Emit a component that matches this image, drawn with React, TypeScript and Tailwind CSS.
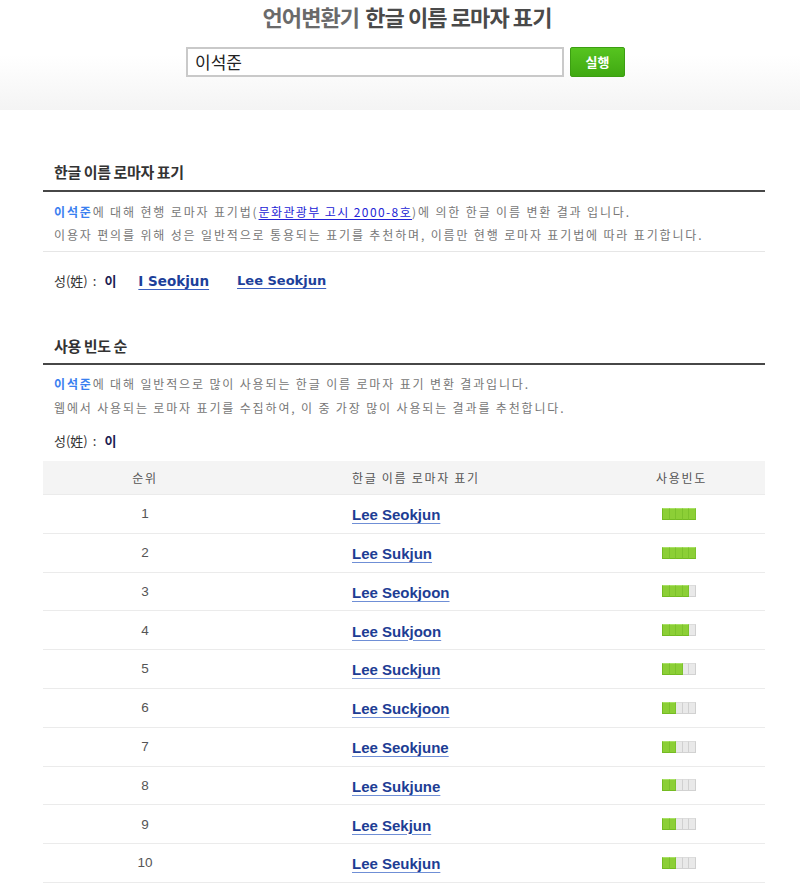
import React from "react";

const KR = "font-['Noto_Sans_CJK_KR',_'Noto_Sans',_sans-serif]";

const rows: [number, string, number][] = [
  [1, "Lee Seokjun", 5],
  [2, "Lee Sukjun", 5],
  [3, "Lee Seokjoon", 4],
  [4, "Lee Sukjoon", 4],
  [5, "Lee Suckjun", 3],
  [6, "Lee Suckjoon", 2],
  [7, "Lee Seokjune", 2],
  [8, "Lee Sukjune", 2],
  [9, "Lee Sekjun", 2],
  [10, "Lee Seukjun", 2],
];

function Bar({ n }: { n: number }) {
  return (
    <div className="flex h-[12px] w-[34px]">
      {[0, 1, 2, 3, 4].map((i) =>
        i < n ? (
          <div
            key={i}
            className="flex-1 bg-[#8ccf36] border-t border-t-[#a9e066] border-b border-b-[#74bb22] border-r border-r-[#7cc22c] first:border-l first:border-l-[#74bb22]"
          />
        ) : (
          <div
            key={i}
            className="flex-1 bg-[#e9e9e9] border-t border-t-[#dcdcdc] border-b border-b-[#d2d2d2] border-r border-r-[#d0d0d0]"
          />
        )
      )}
    </div>
  );
}

function SurnameRow({ links }: { links?: boolean }) {
  return (
    <div className={`flex items-center h-[20px] pl-[11px] text-[13px] text-[#333] ${KR}`}>
      <span>성(姓)</span>
      <span className="ml-[5px]">:</span>
      <span className="ml-[8px] font-bold text-[#1b1b52]">이</span>
      {links && (
        <>
          <a className="ml-[22px] font-['DejaVu_Sans',_sans-serif] font-bold text-[13.5px] text-[#1d3f9a] underline underline-offset-[3px] decoration-[#3a5fc0]">
            I Seokjun
          </a>
          <a className="ml-[28px] font-['DejaVu_Sans',_sans-serif] font-bold text-[13px] text-[#1d3f9a] underline underline-offset-[3px] decoration-[#3a5fc0]">
            Lee Seokjun
          </a>
        </>
      )}
    </div>
  );
}

export default function App() {
  return (
    <div className={`w-[800px] min-h-[895px] bg-white ${KR}`}>
      <div className="h-[110px] bg-gradient-to-b from-white via-white to-[#f4f4f4] flex flex-col items-center">
        <div className="mt-[2px] h-[28px] flex items-center text-[22px] tracking-[-0.9px] leading-[28px] pl-[14px]">
          <span className="font-semibold text-[#6a6a6a]">언어변환기</span>
          <span className="font-bold text-[#4a4a4a] ml-[6px]">한글 이름 로마자 표기</span>
        </div>
        <div className="mt-[17px] flex items-center pl-[11px]">
          <div className="w-[378px] h-[30px] border-2 border-[#c9c9c9] bg-white flex items-center pl-[7px] text-[17px] text-[#222]">
            이석준
          </div>
          <div className="ml-[6px] w-[55px] h-[30px] rounded-[2px] border border-[#3c9e12] bg-gradient-to-b from-[#56c41f] to-[#40a912] flex items-center justify-center text-white text-[13px] font-bold">
            실행
          </div>
        </div>
      </div>

      <div className="ml-[43px] w-[722px]">
        {/* Section 1 */}
        <div className="mt-[52px] pl-[11px] pb-[8px] border-b-2 border-[#474747] text-[15px] leading-[20px] font-bold tracking-[-0.4px] text-[#333]">
          한글 이름 로마자 표기
        </div>
        <div className="pt-[8px] pb-[5px] pl-[11px] border-b border-[#e6e6e6] text-[12px] leading-[23px] tracking-[1.85px] text-[#777]">
          <div>
            <span className="font-bold text-[#3a80f0]">이석준</span>에 대해 현행 로마자 표기법(
            <a className="text-[#2323d6] underline underline-offset-2 tracking-[1.4px]">문화관광부 고시 2000-8호</a>)에 의한 한글 이름 변환 결과 입니다.
          </div>
          <div>이용자 편의를 위해 성은 일반적으로 통용되는 표기를 추천하며, 이름만 현행 로마자 표기법에 따라 표기합니다.</div>
        </div>
        <div className="mt-[19px]">
          <SurnameRow links />
        </div>

        {/* Section 2 */}
        <div className="mt-[45px] pl-[11px] pb-[7px] border-b-2 border-[#474747] text-[15px] leading-[20px] font-bold tracking-[-0.4px] text-[#333]">
          사용 빈도 순
        </div>
        <div className="pt-[7px] pl-[11px] text-[12px] leading-[24px] tracking-[1.85px] text-[#777]">
          <div>
            <span className="font-bold text-[#3a80f0]">이석준</span>에 대해 일반적으로 많이 사용되는 한글 이름 로마자 표기 변환 결과입니다.
          </div>
          <div>웹에서 사용되는 로마자 표기를 수집하여, 이 중 가장 많이 사용되는 결과를 추천합니다.</div>
        </div>
        <div className="mt-[11px]">
          <SurnameRow />
        </div>

        <div className="mt-[10px]">
          <div className="grid grid-cols-[204px_1fr_160px] h-[34px] bg-[#f4f4f4] border-b border-[#ebebeb] items-center text-[12px] text-[#555] tracking-[1.7px]">
            <div className="text-center">순위</div>
            <div className="pl-[105px]">한글 이름 로마자 표기</div>
            <div className="pl-[51px]">사용빈도</div>
          </div>
          {rows.map(([rank, name, n]) => (
            <div
              key={rank}
              className="grid grid-cols-[204px_1fr_160px] h-[38.8px] border-b border-[#ebebeb] items-center"
            >
              <div className="text-center text-[13.5px] text-[#555] font-['Liberation_Sans',_sans-serif] pt-[1px]">{rank}</div>
              <div className="pl-[105px]">
                <a className="font-['Liberation_Sans',_sans-serif] font-bold text-[15px] text-[#1d3d94] underline underline-offset-[3px] decoration-[#6f8fd6]">
                  {name}
                </a>
              </div>
              <div className="pl-[57px]">
                <Bar n={n} />
              </div>
            </div>
          ))}
        </div>
      </div>
    </div>
  );
}
